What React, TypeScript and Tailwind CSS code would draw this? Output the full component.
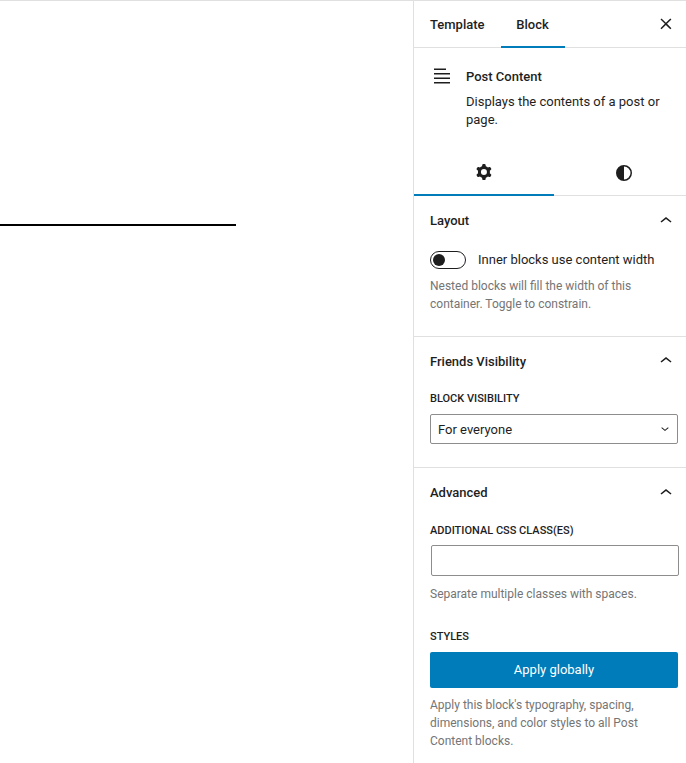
const Chevron = ({ tight = false }: { tight?: boolean }) => (
  <svg viewBox="0 0 24 24" width="24" height="24" fill="currentColor" className={tight ? "-mt-[2px] text-[#1e1e1e]" : "text-[#1e1e1e]"}>
    <path d="M6.5 13.4L12 9l5.5 4.4-.9 1.2L12 11l-4.5 3.6-1-1.2z" />
  </svg>
);

function PanelTitle({ title, tight }: { title: string; tight?: boolean }) {
  return (
    <div className="flex h-[48px] items-center justify-between pr-2 pl-4">
      <span className="pt-[2px] text-[13px] font-medium text-[#1e1e1e]">{title}</span>
      <Chevron tight={tight} />
    </div>
  );
}

function Label({ children }: { children: string }) {
  return <div className="text-[11px] leading-[16px] font-medium text-[#1e1e1e] uppercase">{children}</div>;
}

export default function App() {
  return (
    <div className="flex h-[763px] w-[686px] overflow-hidden border-t border-[#e0e0e0] bg-white font-['Roboto',sans-serif]">
      <main className="w-[413px] shrink-0 pt-[223px]">
        <div className="h-[2px] w-[236px] bg-black" />
      </main>

      <aside className="w-[273px] shrink-0 border-l border-[#e0e0e0]">
        <div className="flex h-[47px] items-center justify-between border-b border-[#e0e0e0] pr-2">
          <div className="flex h-full">
            <button type="button" className="flex h-full items-center pt-[2px] pr-4 pl-4 text-[13px] font-medium text-[#1e1e1e]">
              Template
            </button>
            <button type="button" className="-mb-px flex h-[47px] w-[64px] items-center justify-center border-b-2 border-[#007cba] pt-[2px] text-[13px] font-medium text-[#1e1e1e]">
              Block
            </button>
          </div>
          <svg viewBox="0 0 24 24" width="24" height="24" fill="currentColor" className="text-[#1e1e1e]">
            <path d="M13 11.8l4.4-4.4-1.1-1-4.4 4.4-4.4-4.4-1 1 4.4 4.4-4.4 4.4 1 1.1 4.4-4.4 4.4 4.4 1.1-1.1-4.4-4.4z" />
          </svg>
        </div>

        <div className="flex h-[103px] gap-[12px] pt-4 pr-6 pl-4">
          <svg viewBox="0 0 24 24" width="24" height="24" fill="currentColor" className="shrink-0 text-[#1e1e1e]">
            <path d="M4 6h12V4.5H4V6zm16 4.5H4V9h16v1.5zM4 15h16v-1.5H4V15zm0 4.5h16V18H4v1.5z" />
          </svg>
          <div className="pt-[4px]">
            <div className="text-[13px] leading-[18px] font-medium text-[#1e1e1e]">Post Content</div>
            <p className="mt-[7px] text-[13px] leading-[18px] text-[#1e1e1e]">Displays the contents of a post or page.</p>
          </div>
        </div>

        <div className="grid h-[45px] grid-cols-[140px_140px] overflow-visible border-b border-[#e0e0e0]">
          <div className="-mb-px flex h-[45px] items-center justify-center border-b-2 border-[#007cba] pb-[2px]">
            <svg viewBox="0 0 24 24" width="24" height="24" fill="currentColor" className="text-[#1e1e1e]">
              <path
                fillRule="evenodd"
                d="M10.289 4.836A1 1 0 0111.275 4h1.306a1 1 0 01.987.836l.244 1.466c.787.26 1.503.679 2.108 1.218l1.393-.522a1 1 0 011.216.437l.653 1.13a1 1 0 01-.23 1.273l-1.148.944a6.025 6.025 0 010 2.435l1.149.946a1 1 0 01.23 1.272l-.653 1.13a1 1 0 01-1.216.437l-1.394-.522c-.605.54-1.32.958-2.108 1.218l-.244 1.466a1 1 0 01-.987.836h-1.306a1 1 0 01-.986-.836l-.244-1.466a5.995 5.995 0 01-2.108-1.218l-1.394.522a1 1 0 01-1.217-.436l-.653-1.131a1 1 0 01.23-1.272l1.149-.946a6.026 6.026 0 010-2.435l-1.148-.944a1 1 0 01-.23-1.272l.653-1.131a1 1 0 011.217-.437l1.393.522a5.994 5.994 0 012.108-1.218l.244-1.466zM14.929 12a3 3 0 11-6 0 3 3 0 016 0z"
              />
            </svg>
          </div>
          <div className="flex items-center justify-center pb-[1px]">
            <svg viewBox="0 0 24 24" width="24" height="24" fill="currentColor" className="text-[#1e1e1e]">
              <path
                fillRule="evenodd"
                d="M12 4a8 8 0 100 16 8 8 0 000-16zm0 1.5v13a6.5 6.5 0 010-13z"
                transform="matrix(-1 0 0 1 24 0)"
              />
            </svg>
          </div>
        </div>

        <section className="h-[141px] border-b border-[#e0e0e0]">
          <PanelTitle title="Layout" />
          <div className="pr-4 pl-4">
            <div className="mt-[6px] flex h-[20px] items-center gap-3">
              <div className="flex h-[18px] w-[36px] items-center rounded-[9px] border border-[#1e1e1e] pl-[2px]">
                <div className="h-3 w-3 rounded-full bg-[#1e1e1e]" />
              </div>
              <span className="text-[13px] text-[#1e1e1e]">Inner blocks use content width</span>
            </div>
            <p className="mt-[7px] text-[12px] leading-[18px] text-[#757575]">
              Nested blocks will fill the width of this container. Toggle to constrain.
            </p>
          </div>
        </section>

        <section className="h-[131px] border-b border-[#e0e0e0]">
          <PanelTitle title="Friends Visibility" tight />
          <div className="pt-[6px] pr-2 pl-4">
            <Label>BLOCK VISIBILITY</Label>
            <div className="mt-[7px] flex h-[30px] items-center justify-between rounded-[2px] border border-[#8d8d8d] pr-[4px] pl-[7px] text-[13px] text-[#1e1e1e]">
              <span className="pt-[2px]">For everyone</span>
              <svg viewBox="0 0 24 24" width="16" height="16" fill="currentColor">
                <path d="M17.5 11.6L12 16l-5.5-4.4.9-1.2L12 14l4.5-3.6 1 1.2z" transform="translate(0 -1)" />
              </svg>
            </div>
          </div>
        </section>

        <section>
          <PanelTitle title="Advanced" />
          <div className="pr-2 pl-4">
            <div className="mt-[7px]">
              <Label>ADDITIONAL CSS CLASS(ES)</Label>
            </div>
            <div className="mt-[6px] -mr-px ml-px h-[31px] rounded-[2px] border border-[#8d8d8d]" />
            <p className="mt-[9px] text-[12px] leading-[18px] text-[#757575]">Separate multiple classes with spaces.</p>
            <div className="mt-[26px]">
              <Label>STYLES</Label>
            </div>
            <button type="button" className="mt-[7px] h-[36px] w-full rounded-[2px] bg-[#007cba] text-[13px] text-white">
              Apply globally
            </button>
            <p className="mt-[8px] text-[12px] leading-[18px] text-[#757575]">
              Apply this block's typography, spacing, dimensions, and color styles to all Post Content blocks.
            </p>
          </div>
        </section>
      </aside>
    </div>
  );
}
